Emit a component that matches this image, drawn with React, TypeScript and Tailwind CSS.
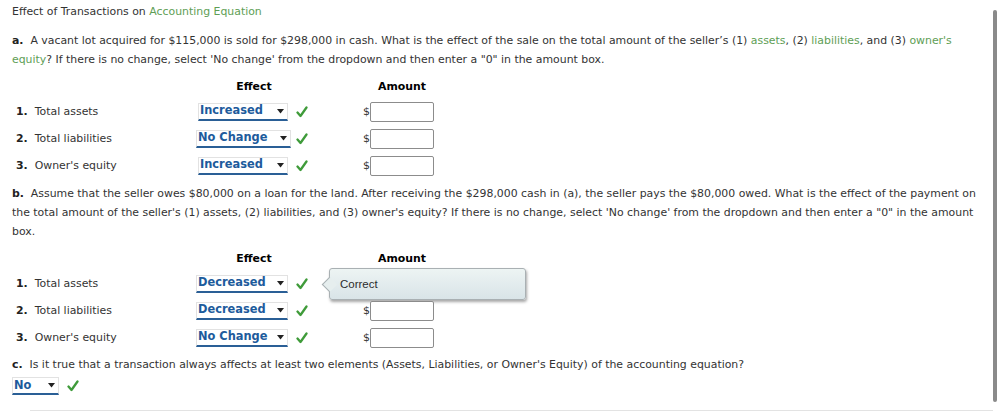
import React from 'react';

const green = 'text-[#5e9e55]';

function Check() {
  return (
    <svg width="12" height="12" viewBox="0 0 12 12" className="shrink-0">
      <path d="M1.5 6.5 L4.5 10 L10.5 1.5" fill="none" stroke="#3f9b3a" strokeWidth="2.3" strokeLinecap="round" strokeLinejoin="round" />
    </svg>
  );
}

function Pick({ value, cls }: { value: string; cls: string }) {
  return (
    <div className={`flex h-[18px] items-center justify-between border border-[#e2e2e2] border-b-2 border-b-[#2a5f96] bg-white pl-[1px] pr-[3px] ${cls}`}>
      <span className="text-[11.4px] font-bold leading-none text-[#1d5b9c]">{value}</span>
      <svg width="7" height="5" viewBox="0 0 7 5">
        <path d="M0 0 H7 L3.5 4.5 Z" fill="#222" />
      </svg>
    </div>
  );
}

function Amount() {
  return (
    <div className="flex items-center">
      <span className="w-[7px] text-[11px] leading-none text-[#333]">$</span>
      <div className="h-[20px] w-[64px] rounded-[2px] border border-[#8c8c8c] bg-white" />
    </div>
  );
}

type Row = { n: string; label: string; value: string; cls: string; amount?: boolean; tip?: boolean };

function Table({ rows }: { rows: Row[] }) {
  return (
    <div>
      <div className="flex h-[24px] items-center font-bold text-black">
        <div className="w-[184px]" />
        <div className="w-[116px] text-center">Effect</div>
        <div className="w-[48px]" />
        <div className="w-[84px] text-center">Amount</div>
      </div>
      {rows.map((r) => (
        <div key={r.n} className="relative flex h-[27px] items-center">
          <div className="w-[184px] pl-[4px]">
            <b className="text-[#222]">{r.n}.</b>
            <span className="ml-[7px]">{r.label}</span>
          </div>
          <div className="flex w-[100px] items-center">
            <Pick value={r.value} cls={r.cls} />
          </div>
          <Check />
          <div className="w-[55px]" />
          {r.amount !== false && <Amount />}
          {r.tip && (
            <div className="absolute left-[317px] top-[-2px] flex h-[32px] w-[197px] items-center rounded-[3px] border border-[#a9b0b3] bg-gradient-to-b from-[#edf4f3] to-[#d9e4e8] pl-[10px] font-['Liberation_Sans',Arial,sans-serif] text-[11.5px] text-[#2c2c2c] shadow-[1px_2px_3px_rgba(0,0,0,0.35)]">
              <div className="absolute left-[-6px] top-[10px] h-[11px] w-[11px] rotate-45 border-b border-l border-[#a9b0b3] bg-[#e6eeee]" />
              <span className="relative">Correct</span>
            </div>
          )}
        </div>
      ))}
    </div>
  );
}

export default function App() {
  return (
    <div className="flex h-[412px] w-[997px] overflow-hidden bg-white font-['DejaVu_Sans',Verdana,sans-serif] text-[10.9px] leading-[19px] text-[#333]">
      <div className="flex-1 pl-[12px] pt-[2px]">
        <div>
          Effect of Transactions on <span className={green}>Accounting Equation</span>
        </div>

        <p className="mt-[10px]">
          <b className="text-[#222]">a.</b>&nbsp; A vacant lot acquired for $115,000 is sold for $298,000 in cash. What is the effect of the sale on the total amount of the seller’s (1){' '}
          <span className={green}>assets</span>, (2) <span className={green}>liabilities</span>, and (3) <span className={green}>owner's</span>
          <br />
          <span className={green}>equity</span>? If there is no change, select 'No change' from the dropdown and then enter a "0" in the amount box.
        </p>

        <div className="mt-[5px]">
          <Table
            rows={[
              { n: '1', label: 'Total assets', value: 'Increased', cls: 'ml-[2px] w-[90px]' },
              { n: '2', label: 'Total liabilities', value: 'No Change', cls: 'w-[95px]' },
              { n: '3', label: "Owner's equity", value: 'Increased', cls: 'ml-[2px] w-[90px]' },
            ]}
          />
        </div>

        <p className="mt-[5px]">
          <b className="text-[#222]">b.</b>&nbsp; Assume that the seller owes $80,000 on a loan for the land. After receiving the $298,000 cash in (a), the seller pays the $80,000 owed. What is the effect of the payment on
          <br />
          the total amount of the seller's (1) assets, (2) liabilities, and (3) owner's equity? If there is no change, select 'No change' from the dropdown and then enter a "0" in the amount
          <br />
          box.
        </p>

        <div className="mt-[5px]">
          <Table
            rows={[
              { n: '1', label: 'Total assets', value: 'Decreased', cls: 'w-[92px]', amount: false, tip: true },
              { n: '2', label: 'Total liabilities', value: 'Decreased', cls: 'w-[92px]' },
              { n: '3', label: "Owner's equity", value: 'No Change', cls: 'w-[92px]' },
            ]}
          />
        </div>

        <p className="mt-[4px]">
          <b className="text-[#222]">c.</b>&nbsp; Is it true that a transaction always affects at least two elements (Assets, Liabilities, or Owner's Equity) of the accounting equation?
        </p>
        <div className="mt-[3px] flex items-center gap-[8px]">
          <Pick value="No" cls="w-[47px]" />
          <Check />
        </div>

        <div className="ml-[18px] mt-[15px] border-t border-[#e3e3e3]" />
      </div>
      <div className="my-[10px] w-[4px] rounded-[2px] bg-[#8a8a8a]" />
    </div>
  );
}
